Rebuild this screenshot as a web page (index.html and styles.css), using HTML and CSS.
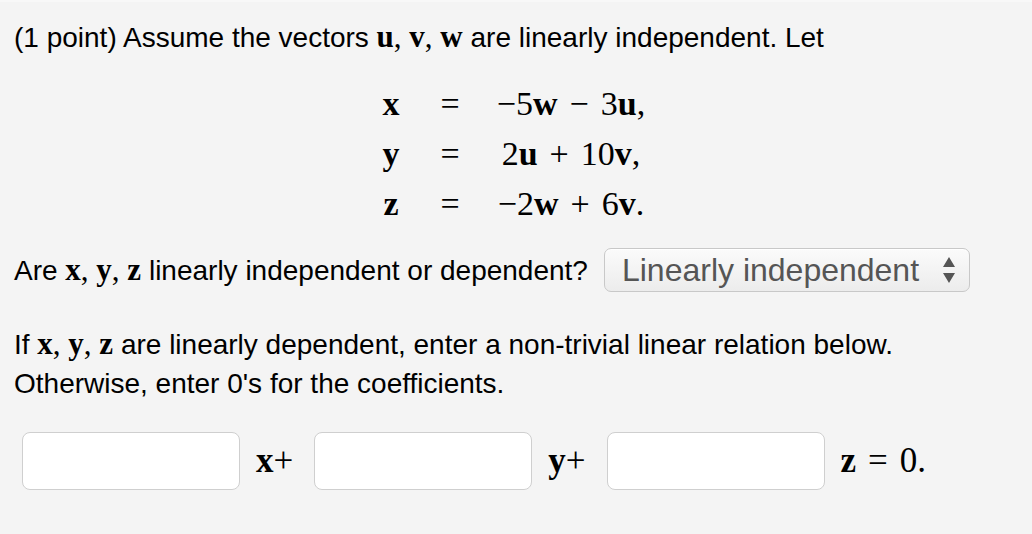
FILE: index.html
```html
<!DOCTYPE html>
<html>
<head>
<meta charset="utf-8">
<link rel="stylesheet" href="styles.css">
</head>
<body>
<div class="problem">
  <p class="line first">(1 point) Assume the vectors <span class="m"><b>u</b>, <b>v</b>, <b>w</b></span> are linearly independent. Let</p>

  <div class="eqns">
    <span class="lhs">x</span><span class="eq">=</span><span class="rhs">−5<b>w</b><span class="bin">−</span>3<b>u</b>,</span>
    <span class="lhs">y</span><span class="eq">=</span><span class="rhs">2<b>u</b><span class="bin">+</span>10<b>v</b>,</span>
    <span class="lhs">z</span><span class="eq">=</span><span class="rhs">−2<b>w</b><span class="bin">+</span>6<b>v</b>.</span>
  </div>

  <div class="question">
    <span>Are <span class="m"><b>x</b>, <b>y</b>, <b>z</b></span> linearly independent or dependent?</span>
    <div class="select">
      <span class="select-text">Linearly independent</span>
      <svg class="arrows" width="14" height="28" viewBox="0 0 14 28"><path d="M7 1 L13 11 L1 11 Z M1 17 L13 17 L7 27 Z" fill="#555"/></svg>
    </div>
  </div>

  <p class="para">If <span class="m"><b>x</b>, <b>y</b>, <b>z</b></span> are linearly dependent, enter a non-trivial linear relation below.<br>Otherwise, enter 0's for the coefficients.</p>

  <div class="relation">
    <div class="box"></div>
    <span class="lbl m"><b>x</b>+</span>
    <div class="box"></div>
    <span class="lbl m"><b>y</b>+</span>
    <div class="box"></div>
    <span class="lbl m last"><b>z</b><span class="op">=</span>0.</span>
  </div>
</div>
</body>
</html>
```

FILE: styles.css
```css
html, body {
  margin: 0;
  padding: 0;
  background: #f4f4f4;
}
body {
  border-top: 2px solid #f8f8f8;
  font-family: "Liberation Sans", Arial, Helvetica, sans-serif;
  font-size: 28px;
  color: #000;
}
.problem {
  padding: 15px 14px 0 14px;
}
p {
  margin: 0;
}
.line {
  line-height: 39px;
}
.m {
  font-family: "Liberation Serif", "Times New Roman", serif;
  font-size: 31px;
}
.m b {
  font-weight: bold;
}
.eqns {
  display: grid;
  grid-template-columns: 42px 76px 166px;
  grid-auto-rows: 50px;
  margin: 22px 0 0 356px;
  font-family: "Liberation Serif", "Times New Roman", serif;
  font-size: 34px;
  align-items: center;
  text-align: center;
}
.eqns .lhs {
  font-weight: bold;
}
.bin {
  margin: 0 12px;
}
.question {
  display: flex;
  align-items: center;
  gap: 16px;
  margin-top: 19px;
}
.select {
  box-sizing: border-box;
  width: 366px;
  height: 44px;
  border: 1.5px solid #c8c8c8;
  border-radius: 7px;
  background: linear-gradient(#fbfbfb, #ececec);
  box-shadow: inset 0 1px 0 #fff;
  display: flex;
  align-items: center;
  justify-content: space-between;
  padding: 0 13px 0 17px;
}
.select-text {
  font-size: 32px;
  color: #555;
}
.arrows {
  display: block;
}
.para {
  margin-top: 32px;
  line-height: 39px;
}
.relation {
  display: flex;
  align-items: center;
  margin-top: 29px;
  padding-left: 8px;
}
.box {
  box-sizing: border-box;
  width: 218px;
  height: 58px;
  background: #fff;
  border: 1.5px solid #cfcfcf;
  border-radius: 8px;
}
.lbl {
  font-size: 35px;
  margin: 0 21px 0 16px;
}
.lbl.last {
  margin-right: 0;
}
.op {
  margin: 0 12px;
}
```
